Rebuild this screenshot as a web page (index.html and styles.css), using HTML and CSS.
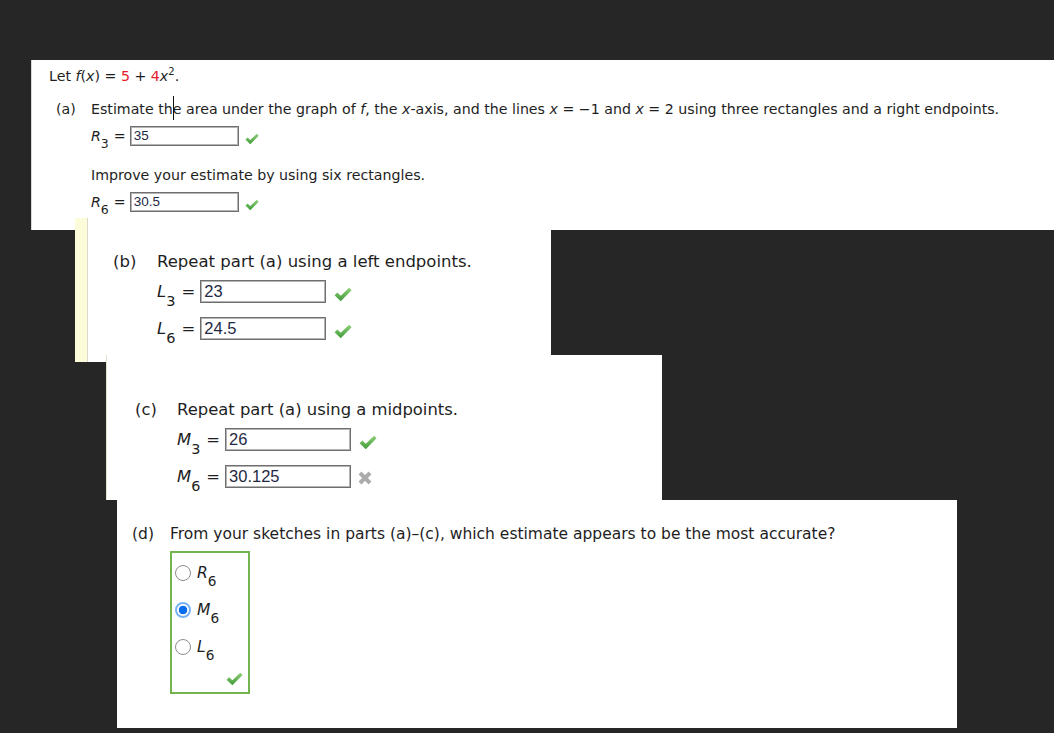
FILE: index.html
```html
<!DOCTYPE html>
<html>
<head>
<meta charset="utf-8">
<link rel="stylesheet" href="styles.css">
</head>
<body>
<div class="canvas">
  <section class="panel pa">
    <span class="ibeam"></span>
    <p class="let">Let <i>f</i>(<i>x</i>) = <span class="red">5</span> + <span class="red">4</span><i>x</i><sup>2</sup>.</p>
    <div class="part">
      <span class="plabel">(a)</span>
      <div class="pbody">
        <p class="q">Estimate the area under the graph of <i>f</i>, the <i>x</i>-axis, and the lines <i>x</i> = &minus;1 and <i>x</i> = 2 using three rectangles and a right endpoints.</p>
        <div class="ans">
          <span class="var"><i>R</i><sub>3</sub></span><span class="eq">=</span><span class="box">35</span>
          <svg class="ok" viewBox="0 0 16 13"><use href="#chk"/></svg>
        </div>
        <p class="q q2">Improve your estimate by using six rectangles.</p>
        <div class="ans">
          <span class="var"><i>R</i><sub>6</sub></span><span class="eq">=</span><span class="box">30.5</span>
          <svg class="ok" viewBox="0 0 16 13"><use href="#chk"/></svg>
        </div>
      </div>
    </div>
  </section>

  <section class="panel pb">
    <div class="part">
      <span class="plabel">(b)</span>
      <div class="pbody">
        <p class="q">Repeat part (a) using a left endpoints.</p>
        <div class="ans">
          <span class="var"><i>L</i><sub>3</sub></span><span class="eq">=</span><span class="box">23</span>
          <svg class="ok" viewBox="0 0 16 13"><use href="#chk"/></svg>
        </div>
        <div class="ans">
          <span class="var"><i>L</i><sub>6</sub></span><span class="eq">=</span><span class="box">24.5</span>
          <svg class="ok" viewBox="0 0 16 13"><use href="#chk"/></svg>
        </div>
      </div>
    </div>
  </section>

  <section class="panel pc">
    <div class="part">
      <span class="plabel">(c)</span>
      <div class="pbody">
        <p class="q">Repeat part (a) using a midpoints.</p>
        <div class="ans">
          <span class="var"><i>M</i><sub>3</sub></span><span class="eq">=</span><span class="box">26</span>
          <svg class="ok" viewBox="0 0 16 13"><use href="#chk"/></svg>
        </div>
        <div class="ans">
          <span class="var"><i>M</i><sub>6</sub></span><span class="eq">=</span><span class="box">30.125</span>
          <svg class="bad" viewBox="0 0 16 16"><path d="M3 3 L13 13 M13 3 L3 13" stroke="#ababab" stroke-width="4" stroke-linecap="butt"/></svg>
        </div>
      </div>
    </div>
  </section>

  <section class="panel pd">
    <div class="part">
      <span class="plabel">(d)</span>
      <div class="pbody">
        <p class="q">From your sketches in parts (a)&ndash;(c), which estimate appears to be the most accurate?</p>
        <div class="choices">
          <div class="opt"><span class="radio"></span><span class="var"><i>R</i><sub>6</sub></span></div>
          <div class="opt"><span class="radio on"></span><span class="var"><i>M</i><sub>6</sub></span></div>
          <div class="opt"><span class="radio"></span><span class="var"><i>L</i><sub>6</sub></span></div>
          <svg class="ok okd" viewBox="0 0 16 13"><use href="#chk"/></svg>
        </div>
      </div>
    </div>
  </section>
</div>

<svg width="0" height="0" class="defs">
  <defs>
    <linearGradient id="g" x1="0" y1="0" x2="0" y2="1">
      <stop offset="0" stop-color="#8fd07a"/>
      <stop offset="1" stop-color="#3f9a38"/>
    </linearGradient>
    <symbol id="chk" viewBox="0 0 16 13">
      <path d="M0.5 7.2 L3 4.8 L6 7.6 L13.4 0.6 L15.6 2.8 L6 12.4 Z" fill="url(#g)"/>
    </symbol>
  </defs>
</svg>
</body>
</html>
```

FILE: styles.css
```css
html, body {
  margin: 0;
  padding: 0;
  background: #262626;
}
body {
  width: 1054px;
  height: 733px;
  overflow: hidden;
  font-family: "DejaVu Sans", Verdana, sans-serif;
  color: #1e1e1e;
}
.canvas {
  padding-top: 60px;
}
.panel {
  background: #fff;
  box-sizing: border-box;
}
p { margin: 0; }
i { font-style: italic; }
.red { color: #e8202a; }

.defs { position: absolute; }

/* ---------- panel A ---------- */
.pa {
  position: relative;
  margin-left: 31px;
  width: 1023px;
  height: 170px;
  padding: 8px 0 0 17px;
  font-size: 14.2px;
  line-height: 17px;
  border-left: 1px solid #d8d8d8;
}
.ibeam {
  position: absolute;
  left: 141px;
  top: 36px;
  width: 1px;
  height: 24px;
  background: #111;
}
.let sup {
  font-size: 10px;
  vertical-align: 6px;
  line-height: 0;
}
.part {
  display: flex;
}
.pa .part { margin-top: 16px; margin-left: 7px; }
.pa .plabel { width: 35px; flex: none; }
.pa .ans {
  display: flex;
  align-items: center;
  margin-top: 8px;
  height: 20px;
}
.pa .q2 { margin-top: 21px; }

.var { white-space: nowrap; }
.var sub {
  font-size: 0.88em;
  vertical-align: -0.6em;
  line-height: 0;
  margin-left: 0;
}
.eq { margin-left: 6px; margin-right: 5px; }
.pa .eq { margin-left: 5px; margin-right: 4px; }
.box {
  box-sizing: border-box;
  display: inline-block;
  border: 1px solid #6f6f6f;
  box-shadow: inset 0 0 0 1px #b4b4b4;
  background: #fff;
  font-family: "Liberation Sans", Arial, sans-serif;
  color: #1f2a44;
  padding-left: 3px;
}
.pa .box {
  width: 109px;
  height: 20px;
  font-size: 13.5px;
  line-height: 18px;
}
.ok { display: block; }
.pa .ok { width: 14px; height: 12px; margin-left: 6px; margin-top: 5px; }

/* ---------- panel B ---------- */
.pb {
  margin-top: -12px;
  margin-left: 75px;
  width: 476px;
  height: 144px;
  border-left: 12px solid #fdfcda;
  padding: 34px 0 0 26px;
  font-size: 16.5px;
  line-height: 20px;
  position: relative;
}
.pb::before {
  content: "";
  position: absolute;
  left: 0;
  top: 0;
  bottom: 0;
  width: 1px;
  background: #d9d9cf;
}
.pb .plabel, .pc .plabel, .pd .plabel { width: 44px; flex: none; }
.pb .ans, .pc .ans {
  display: flex;
  align-items: center;
  height: 23px;
  margin-top: 8px;
}
.pb .ans + .ans, .pc .ans + .ans { margin-top: 14px; }
.pb .box, .pc .box {
  width: 126px;
  height: 23px;
  font-size: 16.5px;
  line-height: 21px;
}
.pb .ok, .pc .ok { width: 18px; height: 15px; margin-left: 8px; margin-top: 6px; }

/* ---------- panel C ---------- */
.pc {
  margin-top: -7px;
  margin-left: 106px;
  width: 556px;
  height: 145px;
  border-left: 1px solid #e4e2cf;
  padding: 45px 0 0 28px;
  font-size: 16.4px;
  line-height: 20px;
  position: relative;
}
.pc .plabel { width: 42px; }
.bad { width: 16px; height: 16px; display: block; margin-left: 6px; margin-top: 3px; }

/* ---------- panel D ---------- */
.pd {
  margin-left: 117px;
  width: 840px;
  height: 228px;
  padding: 25px 0 0 15px;
  font-size: 15.5px;
  line-height: 19px;
}
.pd .plabel { width: 38px; }
.choices {
  margin-top: 7px;
  width: 80px;
  height: 143px;
  box-sizing: border-box;
  border: 2px solid #72b54f;
  padding: 11px 0 0 3px;
  display: flex;
  flex-direction: column;
}
.opt {
  display: flex;
  align-items: center;
  height: 18px;
  margin-bottom: 19px;
}
.opt .var { margin-left: 6px; }
.radio {
  box-sizing: border-box;
  width: 16px;
  height: 16px;
  border-radius: 50%;
  border: 1px solid #8d8d8d;
  background: #fff;
  display: inline-block;
  flex: none;
}
.radio.on {
  border: 2px solid #7ab3f5;
  background: radial-gradient(circle, #0a6df0 0 4px, #ffffff 4.6px);
}
.okd { width: 17px; height: 14px; margin-left: 51px; margin-top: -3px; }
```
